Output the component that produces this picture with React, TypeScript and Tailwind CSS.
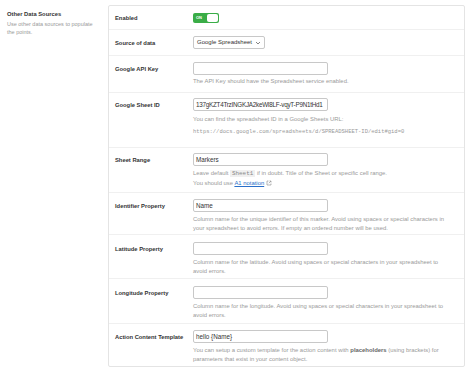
import React from 'react';

const Help = ({ children }: { children: React.ReactNode }) => (
    <p className="mt-[3px] text-[5.9px] leading-[8.5px] text-[#9a9a9a]">{children}</p>
);

const Label = ({ children }: { children: React.ReactNode }) => (
    <div className="pt-[3px] text-[5.8px] font-bold leading-[8px] text-[#333] whitespace-nowrap">{children}</div>
);

const TextInput = ({ value = '', tight = false }: { value?: string; tight?: boolean }) => (
    <div className={`h-[13px] w-[135px] rounded-[2px] border border-[#c8c8c8] bg-white px-[2px] text-[6.3px] leading-[11px] text-[#333] overflow-hidden whitespace-nowrap ${tight ? 'tracking-[-0.25px]' : ''}`}>
        {value}
    </div>
);

export default function App() {
    return (
        <div className="flex h-[374px] w-[474px] bg-white pt-[5px] pr-[9px]" style={{ fontFamily: '"Liberation Sans", Arial, sans-serif' }}>
            {/* Section intro */}
            <div className="w-[108px] shrink-0 pl-[7px] pr-[8px] pt-[5px]">
                <h2 className="text-[5.8px] font-bold leading-[8px] text-[#333]">Other Data Sources</h2>
                <p className="mt-[2px] text-[5.5px] leading-[8px] text-[#9a9a9a]">Use other data sources to populate the points.</p>
            </div>

            {/* Settings card */}
            <div className="h-[362px] flex-1 rounded-[2px] border border-[#e4e4e4] bg-white">
                <div className="grid grid-cols-[78px_1fr] items-center pl-[6px] pr-[11px] h-[24px] border-b border-[#f0f0f0]">
                    <div className="text-[5.8px] font-bold leading-[8px] text-[#333]">Enabled</div>
                    <div className="flex h-[10px] w-[26px] items-center justify-between rounded-[2px] bg-[#3aad47] px-[1px]">
                        <span className="pl-[2px] text-[4px] font-bold text-white">ON</span>
                        <span className="h-[8px] w-[11px] rounded-[2px] bg-white" />
                    </div>
                </div>

                <div className="grid grid-cols-[78px_1fr] items-center pl-[6px] pr-[11px] h-[26px] border-b border-[#f0f0f0]">
                    <div className="text-[5.8px] font-bold leading-[8px] text-[#333]">Source of data</div>
                    <div className="flex h-[13px] w-[72px] items-center justify-between rounded-[2px] border border-[#c8c8c8] px-[3px] text-[6px] text-[#333] whitespace-nowrap">
                        <span>Google Spreadsheet</span>
                        <svg width="6" height="4" viewBox="0 0 6 4" fill="none" stroke="#666" strokeWidth="0.8">
                            <path d="M1 1l2 2 2-2" />
                        </svg>
                    </div>
                </div>

                <div className="grid grid-cols-[78px_1fr] pl-[6px] pr-[11px] pt-[6px] h-[37px] border-b border-[#f0f0f0]">
                    <Label>Google API Key</Label>
                    <div>
                        <TextInput />
                        <p className="mt-[2px] text-[5.9px] leading-[8.5px] text-[#9a9a9a]">The API Key should have the Spreadsheet service enabled.</p>
                    </div>
                </div>

                <div className="grid grid-cols-[78px_1fr] pl-[6px] pr-[11px] pt-[5px] h-[55px] border-b border-[#f0f0f0]">
                    <Label>Google Sheet ID</Label>
                    <div>
                        <TextInput value="137gKZT4TrzINGKJA2keWI8LF-vqyT-P9N1tHd1" tight />
                        <p className="mt-[4px] text-[5.9px] leading-[8.5px] text-[#9a9a9a]">You can find the spreadsheet ID in a Google Sheets URL:</p>
                        <p className="mt-[4px] text-[5.5px] leading-[8.5px] text-[#9a9a9a]" style={{ fontFamily: '"Liberation Mono", monospace' }}>
                            https://docs.google.com/spreadsheets/d/SPREADSHEET-ID/edit#gid=0
                        </p>
                    </div>
                </div>

                <div className="grid grid-cols-[78px_1fr] pl-[6px] pr-[11px] pt-[5px] h-[45px] border-b border-[#f0f0f0]">
                    <Label>Sheet Range</Label>
                    <div>
                        <TextInput value="Markers" />
                        <p className="mt-[3px] text-[5.9px] leading-[8.5px] text-[#9a9a9a]">
                            Leave default{' '}
                            <span className="bg-[#f0f0f0] px-[2px] text-[#888]" style={{ fontFamily: '"Liberation Mono", monospace' }}>Sheet1</span>{' '}
                            if in doubt. Title of the Sheet or specific cell range.
                        </p>
                        <p className="text-[5.9px] leading-[8px] text-[#9a9a9a]">
                            You should use <span className="text-[#2a6fc9] underline">A1 notation</span>
                            <svg className="ml-[2px] inline-block align-[-1px]" width="6" height="6" viewBox="0 0 6 6" fill="none" stroke="#888" strokeWidth="0.6">
                                <path d="M2.5 1H1v4h4V3.5M3.5 1H5v1.5M5 1L2.8 3.2" />
                            </svg>
                        </p>
                    </div>
                </div>

                <div className="grid grid-cols-[78px_1fr] pl-[6px] pr-[11px] pt-[6px] h-[42px] border-b border-[#f0f0f0]">
                    <Label>Identifier Property</Label>
                    <div>
                        <TextInput value="Name" />
                        <Help>Column name for the unique identifier of this marker. Avoid using spaces or special characters in your spreadsheet to avoid errors. If empty an ordered number will be used.</Help>
                    </div>
                </div>

                <div className="grid grid-cols-[78px_1fr] pl-[6px] pr-[11px] pt-[7px] h-[44px] border-b border-[#f0f0f0]">
                    <Label>Latitude Property</Label>
                    <div>
                        <TextInput />
                        <Help>Column name for the latitude. Avoid using spaces or special characters in your spreadsheet to avoid errors.</Help>
                    </div>
                </div>

                <div className="grid grid-cols-[78px_1fr] pl-[6px] pr-[11px] pt-[7px] h-[45px] border-b border-[#f0f0f0]">
                    <Label>Longitude Property</Label>
                    <div>
                        <TextInput />
                        <Help>Column name for the longitude. Avoid using spaces or special characters in your spreadsheet to avoid errors.</Help>
                    </div>
                </div>

                <div className="grid grid-cols-[78px_1fr] pl-[6px] pr-[11px] pt-[6px] h-[43px]">
                    <Label>Action Content Template</Label>
                    <div>
                        <TextInput value="hello {Name}" />
                        <Help>
                            You can setup a custom template for the action content with <b className="font-bold text-[#666]">placeholders</b> (using brackets) for parameters that exist in your content object.
                        </Help>
                    </div>
                </div>
            </div>
        </div>
    );
}
